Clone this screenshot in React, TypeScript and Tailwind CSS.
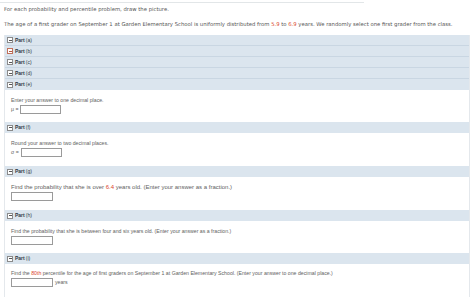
import React from "react";

const Red = ({ children }: { children: React.ReactNode }) => (
  <span className="text-[#d9462b]">{children}</span>
);

const ToggleIcon = ({ tint }: { tint?: boolean }) => (
  <span
    className={
      "flex items-center justify-center w-[6px] h-[6px] border bg-white mr-[2px] " +
      (tint ? "border-[#c0705a]" : "border-[#8a8a8a]")
    }
  >
    <span className={"block w-[3px] h-px " + (tint ? "bg-[#b35a44]" : "bg-[#555]")} />
  </span>
);

const PartBar = ({ label, tint, last }: { label: string; tint?: boolean; last?: boolean }) => (
  <div
    className={
      "flex items-center h-[11px] pl-[2px] bg-[#dbe5ee] " +
      (last ? "" : "border-b border-[#c9d6e2]")
    }
  >
    <ToggleIcon tint={tint} />
    <span className="font-bold text-[#2f3a45] text-[5px] leading-none">Part</span>
    <span className="text-[#2f3a45] text-[5px] leading-none ml-[1px]">({label})</span>
  </div>
);

const Box = ({ w = "w-[41px]" }: { w?: string }) => (
  <span className={"inline-block h-[9px] border border-[#9a9a9a] bg-white " + w} />
);

export default function App() {
  return (
    <div className="w-[474px] h-[297px] bg-white overflow-hidden font-['DejaVu_Sans',sans-serif] text-[#555]">
      <div className="h-[3px] border-b border-[#e2e6e8] mr-[110px]" />
      <div className="px-[4px] pt-[2px] text-[5.3px]">
        <p className="h-[8px] leading-[8px]">
          For each probability and percentile problem, draw the picture.
        </p>
        <p className="mt-[7px] h-[8px] leading-[8px]">
          The age of a first grader on September 1 at Garden Elementary School is uniformly
          distributed from <Red>5.9</Red> to <Red>6.9</Red> years. We randomly select one first
          grader from the class.
        </p>
      </div>

      <div className="mt-[7px] mx-[4px] border-x border-[#e4e8ec] font-['Liberation_Sans',Arial,sans-serif] text-[5.2px] text-[#626262]">
        <PartBar label="a" />
        <PartBar label="b" tint />
        <PartBar label="c" />
        <PartBar label="d" />
        <PartBar label="e" last />

        <div className="h-[32px] pl-[6px] pt-[6px]">
          <div className="h-[8px] leading-[8px]">Enter your answer to one decimal place.</div>
          <div className="flex items-center h-[9px] mt-[1px]">
            <span className="mr-[2px]">μ =</span>
            <Box />
          </div>
        </div>

        <PartBar label="f" last />
        <div className="h-[33px] pl-[6px] pt-[6px]">
          <div className="h-[8px] leading-[8px]">Round your answer to two decimal places.</div>
          <div className="flex items-center h-[9px] mt-[1px]">
            <span className="mr-[2px]">σ =</span>
            <Box />
          </div>
        </div>

        <PartBar label="g" last />
        <div className="h-[33px] pl-[6px] pt-[6px]">
          <div className="h-[8px] leading-[8px] text-[6px]">
            Find the probability that she is over <Red>6.4</Red> years old. (Enter your answer as
            a fraction.)
          </div>
          <div className="flex items-center h-[9px] mt-[1px]">
            <Box w="w-[42px]" />
          </div>
        </div>

        <PartBar label="h" last />
        <div className="h-[32px] pl-[6px] pt-[6px]">
          <div className="h-[8px] leading-[8px]">
            Find the probability that she is between four and six years old. (Enter your answer
            as a fraction.)
          </div>
          <div className="flex items-center h-[9px] mt-[1px]">
            <Box w="w-[42px]" />
          </div>
        </div>

        <PartBar label="i" last />
        <div className="h-[33px] pl-[6px] pt-[5px]">
          <div className="h-[8px] leading-[8px]">
            Find the <Red>80th</Red> percentile for the age of first graders on September 1 at
            Garden Elementary School. (Enter your answer to one decimal place.)
          </div>
          <div className="flex items-center h-[9px] mt-[1px]">
            <Box w="w-[42px]" />
            <span className="ml-[2px]">years</span>
          </div>
        </div>
      </div>
    </div>
  );
}
